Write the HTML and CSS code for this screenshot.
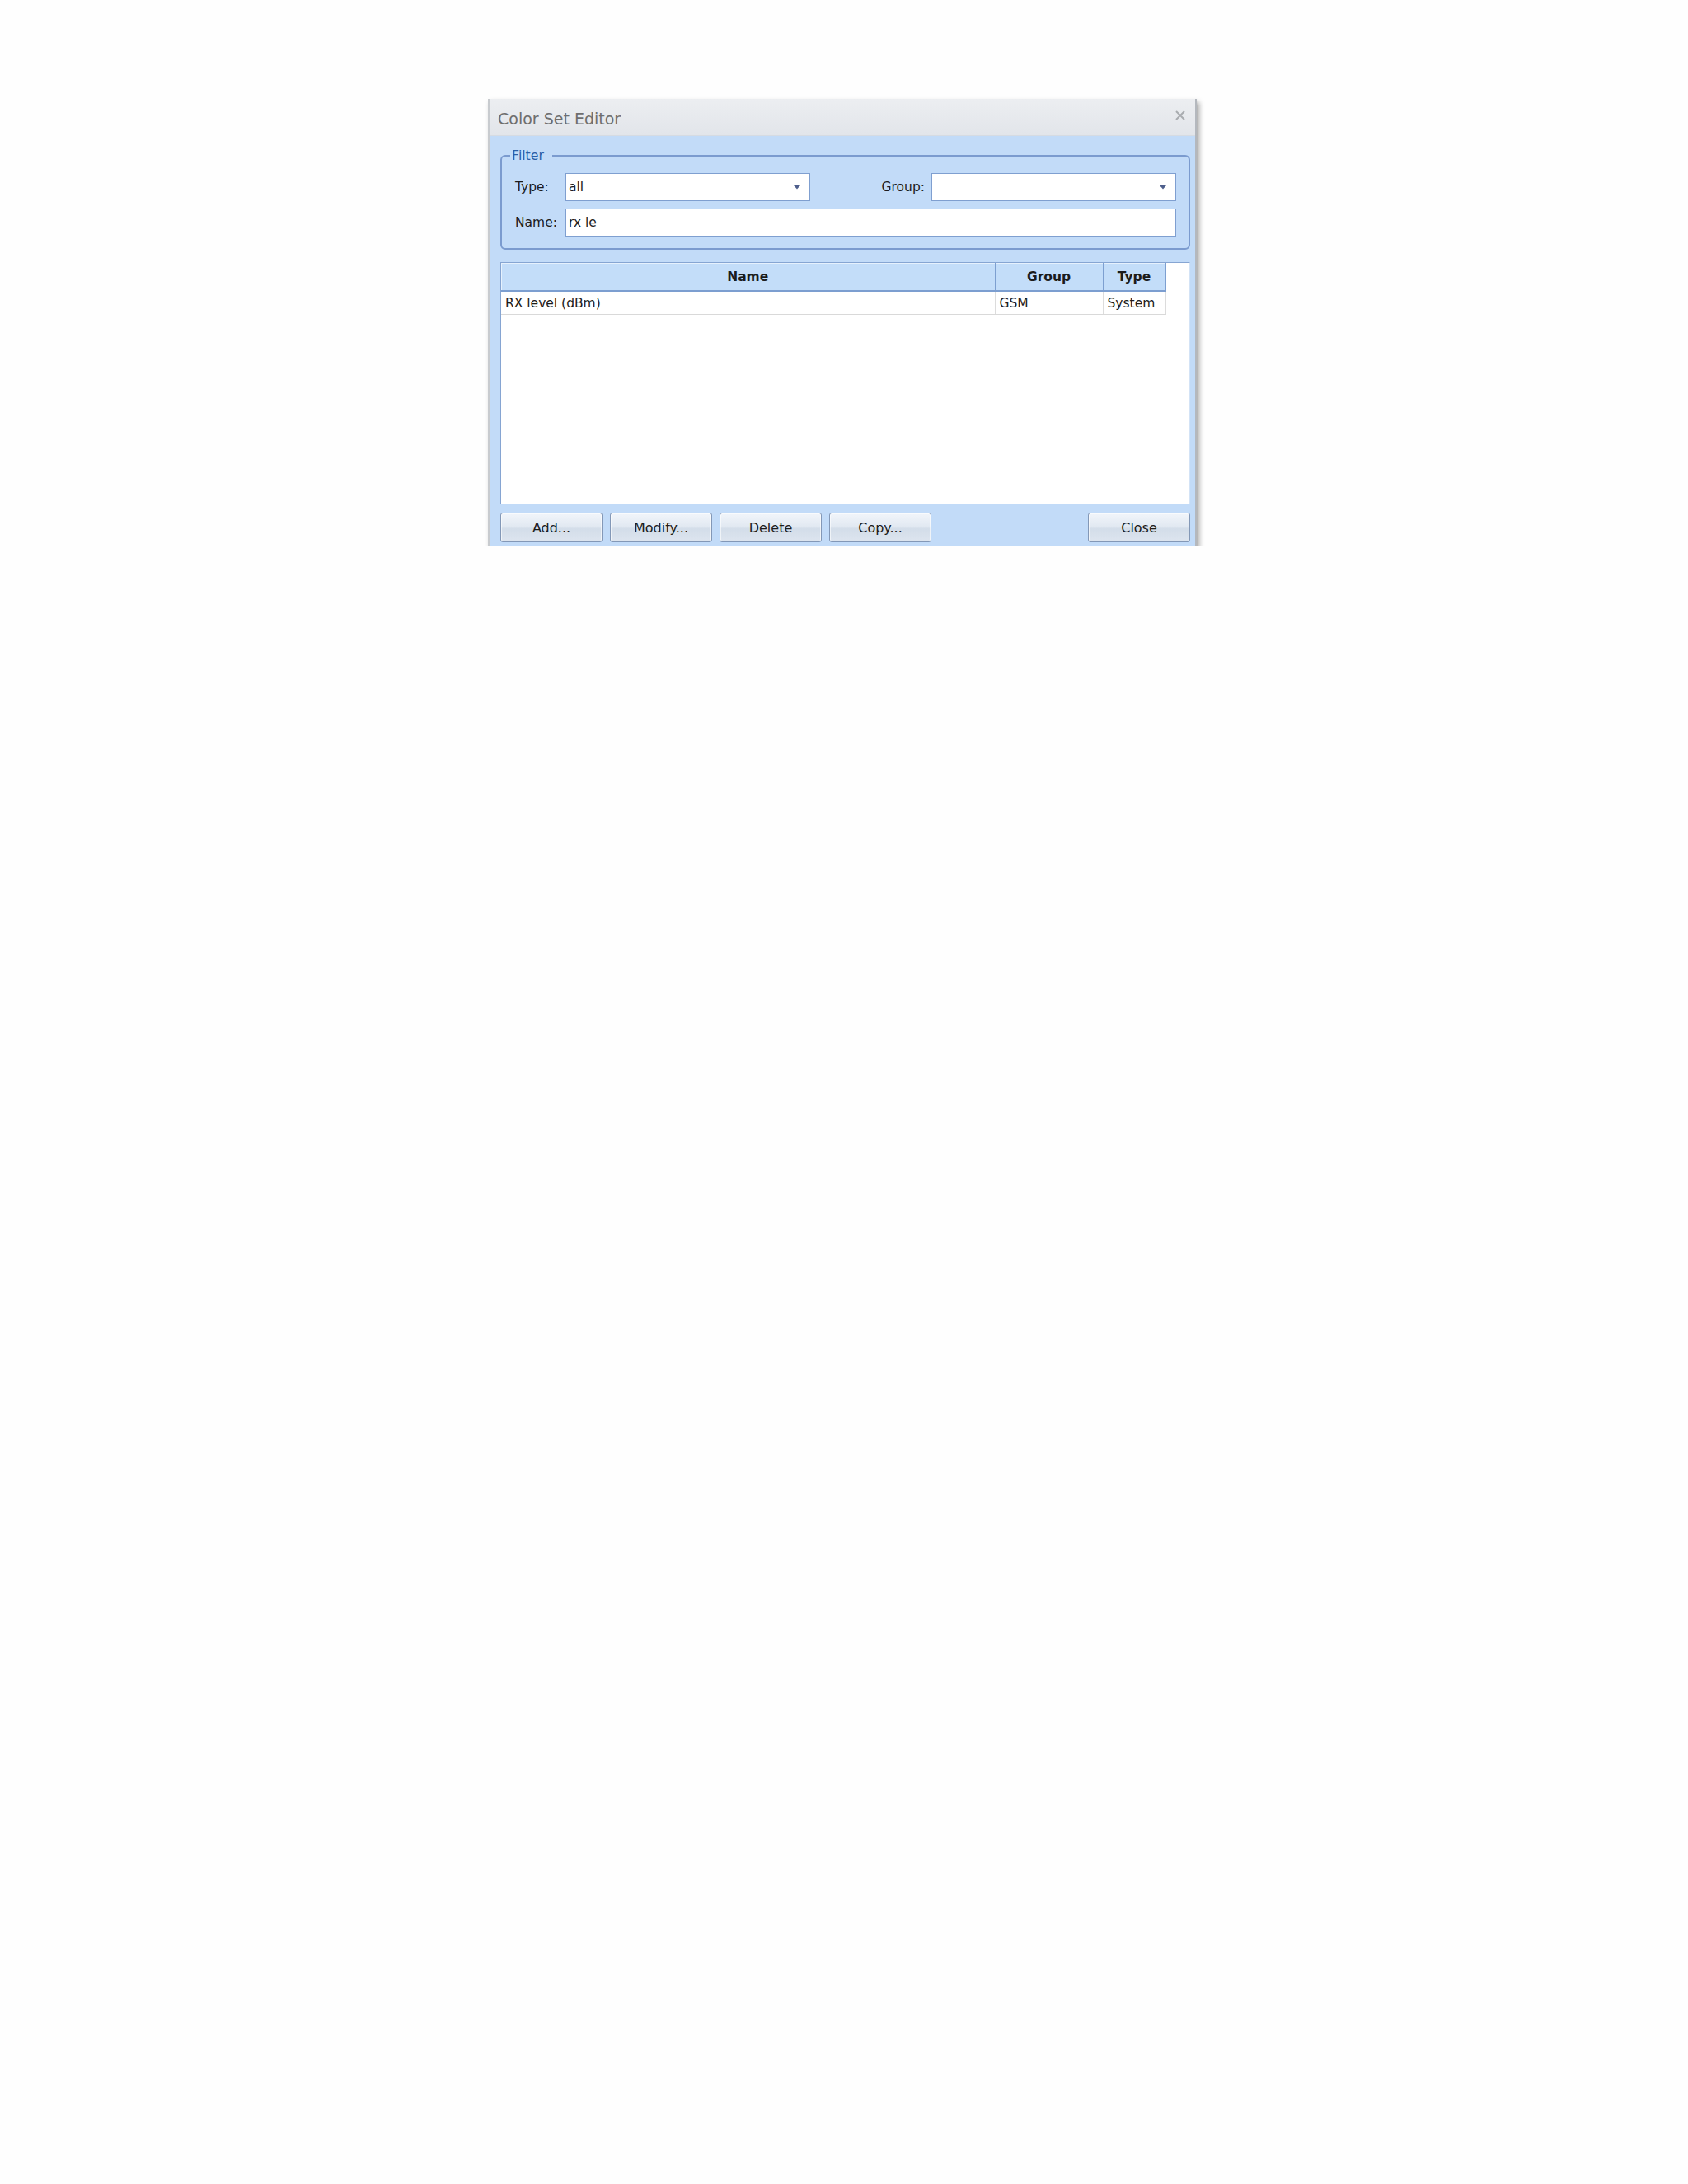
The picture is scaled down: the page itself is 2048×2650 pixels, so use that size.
FILE: index.html
```html
<!DOCTYPE html>
<html>
<head>
<meta charset="utf-8">
<title>Color Set Editor</title>
<link rel="stylesheet" href="styles.css">
</head>
<body>
<div class="page">
  <div class="dialog">
    <div class="titlebar">
      <span class="title">Color Set Editor</span>
      <svg class="close-x" width="12" height="12" viewBox="0 0 12 12"><path d="M1 1 L11 11 M11 1 L1 11" stroke="#a9acb0" stroke-width="2" fill="none"/></svg>
    </div>
    <div class="body">
      <fieldset class="filter">
        <legend>Filter</legend>
        <div class="row">
          <span class="lbl">Type:</span>
          <div class="combo"><span class="val">all</span><svg class="arrow" width="8" height="6" viewBox="0 0 8 6"><path d="M0 0 H8 V1 L4 5.5 L0 1 Z" fill="#4e5f8c"/></svg></div>
          <div class="spacer"></div>
          <span class="lbl-group">Group:</span>
          <div class="combo"><span class="val"></span><svg class="arrow" width="8" height="6" viewBox="0 0 8 6"><path d="M0 0 H8 V1 L4 5.5 L0 1 Z" fill="#4e5f8c"/></svg></div>
        </div>
        <div class="row">
          <span class="lbl">Name:</span>
          <div class="textbox">rx le</div>
        </div>
      </fieldset>
      <div class="grid">
        <table class="list">
          <colgroup><col class="c-name"><col class="c-group"><col class="c-type"></colgroup>
          <thead>
            <tr><th>Name</th><th>Group</th><th>Type</th></tr>
          </thead>
          <tbody>
            <tr><td>RX level (dBm)</td><td>GSM</td><td>System</td></tr>
          </tbody>
        </table>
      </div>
      <div class="buttons">
        <button class="btn">Add...</button>
        <button class="btn">Modify...</button>
        <button class="btn">Delete</button>
        <button class="btn">Copy...</button>
        <button class="btn btn-close">Close</button>
      </div>
    </div>
  </div>
</div>
</body>
</html>
```
FILE: styles.css
```css
html, body {
  margin: 0;
  padding: 0;
  background: #fefefe;
}
body {
  font-family: "DejaVu Sans", "Liberation Sans", sans-serif;
  font-size: 15.5px;
  color: #1c1c1c;
}
.page {
  padding: 120px 0 0 592px;
}
.dialog {
  box-sizing: border-box;
  width: 860px;
  height: 543px;
  border-left: 3px solid #c8cbcf;
  border-right: 2px solid #b4b8be;
  border-bottom: 1px solid #aeb9c8;
  box-shadow: 3px 4px 6px rgba(0, 0, 0, 0.35);
  display: flex;
  flex-direction: column;
  background: #c2dbf8;
}
.titlebar {
  height: 45px;
  flex: none;
  display: flex;
  align-items: center;
  justify-content: space-between;
  padding: 0 12px 0 9px;
  background: linear-gradient(#eceef1, #e2e5ea);
  border-bottom: 1px solid #d6dbe2;
  box-sizing: border-box;
}
.title {
  font-size: 19px;
  color: #6e6e6e;
  padding-top: 3px;
}
.close-x {
  margin-bottom: 4px;
}
.body {
  flex: 1;
  display: flex;
  flex-direction: column;
  padding: 15px 6px 4px 12px;
}
.filter {
  margin: 0;
  padding: 12px 15px 14px 16px;
  border: 2px solid #7b9bcf;
  border-radius: 6px;
  min-width: 0;
}
.filter legend {
  font-size: 15.7px;
  line-height: 18px;
  color: #2b5ea7;
  padding: 0 10px 0 2px;
  margin-left: -6px;
}
.row {
  display: flex;
  align-items: center;
  height: 34px;
}
.row + .row {
  margin-top: 9px;
}
.lbl {
  width: 61px;
  flex: none;
}
.lbl-group {
  margin-right: 8px;
}
.spacer {
  flex: 1;
}
.combo {
  box-sizing: border-box;
  width: 297px;
  height: 34px;
  background: #fff;
  border: 1px solid #7f9fd0;
  display: flex;
  align-items: center;
  justify-content: space-between;
  padding: 0 11px 0 3px;
}
.arrow {
  display: block;
}
.textbox {
  box-sizing: border-box;
  flex: 1;
  height: 34px;
  background: #fff;
  border: 1px solid #7f9fd0;
  display: flex;
  align-items: center;
  padding: 0 3px;
}
.grid {
  box-sizing: border-box;
  margin-top: 15px;
  height: 294px;
  background: #fff;
  border-top: 1px solid #86a5d2;
  border-left: 1px solid #86a5d2;
  border-right: 1px solid #d3e3f6;
  border-bottom: 1px solid #a9c0de;
}
.list {
  border-collapse: collapse;
  table-layout: fixed;
  width: 806px;
}
.c-name { width: 599px; }
.c-group { width: 131px; }
.c-type { width: 76px; }
.list th {
  height: 33px;
  padding: 0;
  font-weight: bold;
  text-align: center;
  background: #c3ddf9;
  border-right: 1px solid #7d9fd0;
  border-bottom: 2px solid #7c9ed0;
  box-shadow: inset 1px 1px 0 #e6f1fd;
}
.list td {
  height: 27px;
  padding: 0 0 0 5px;
  border-right: 1px solid #dcdcdc;
  border-bottom: 1px solid #d9d9d9;
  white-space: nowrap;
  overflow: hidden;
}
.buttons {
  display: flex;
  gap: 9px;
  margin-top: 10px;
  height: 36px;
}
.btn {
  box-sizing: border-box;
  width: 124px;
  height: 36px;
  margin: 0;
  padding: 0;
  font-family: "DejaVu Sans", "Liberation Sans", sans-serif;
  font-size: 16px;
  color: #1c1c1c;
  border: 1px solid #8398b7;
  border-radius: 3px;
  background: linear-gradient(#f1f5fa 0%, #e2e9f2 45%, #d3dde9 55%, #dde5ef 100%);
  box-shadow: inset 0 0 0 1px rgba(255, 255, 255, 0.6);
}
.btn-close {
  margin-left: auto;
}
```
